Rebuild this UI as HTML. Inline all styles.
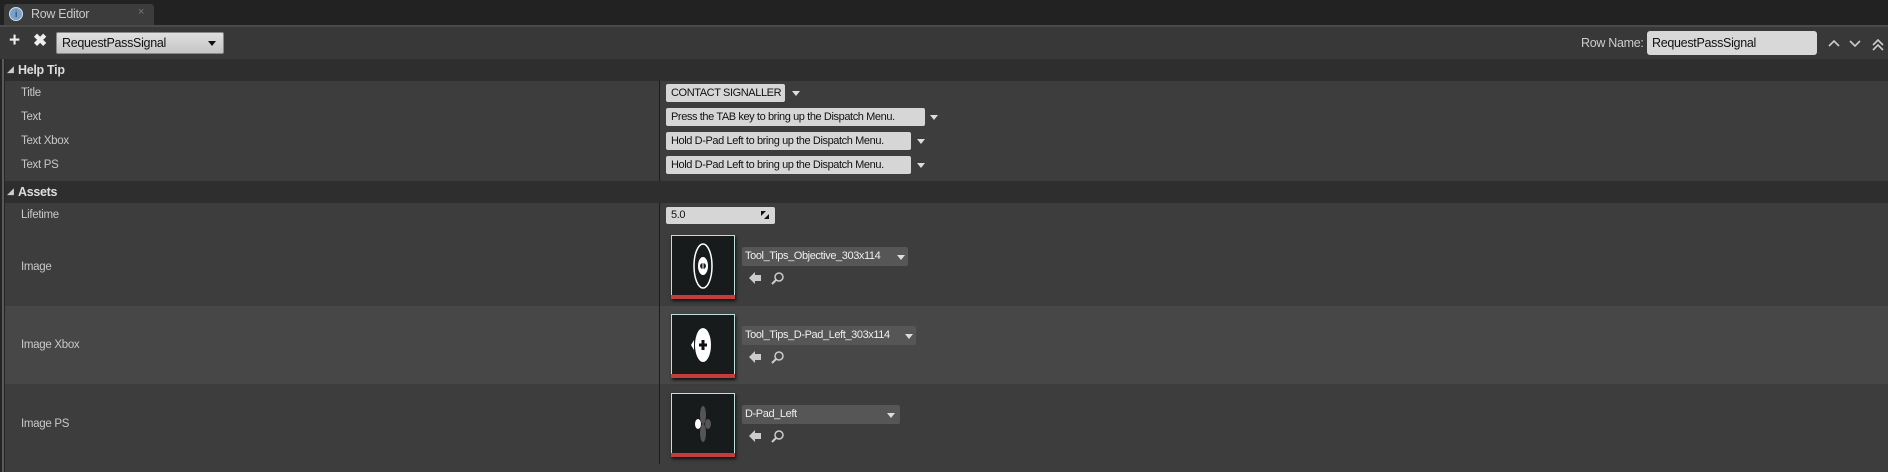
<!DOCTYPE html>
<html><head><meta charset="utf-8"><style>
*{margin:0;padding:0;box-sizing:border-box}
body{width:1888px;height:472px;background:#242424;position:relative;overflow:hidden;font-family:"Liberation Sans",sans-serif;font-size:12px;color:#d0d0d0;letter-spacing:-0.3px}
.a{position:absolute}
.lbl{position:absolute;left:21px;font-size:11.5px;color:#c8c8c8}
.box{position:absolute;background:#d6d6d6;color:#111;border-radius:2px;height:18px;line-height:18px;padding-left:5px;font-size:11px;white-space:nowrap;letter-spacing:-0.4px}
.tri{position:absolute;width:0;height:0;border-left:4px solid transparent;border-right:4px solid transparent;border-top:5px solid #ddd}
.cmb{position:absolute;background:#565656;border-radius:2px;height:19px;line-height:19px;padding-left:3px;color:#eee;font-size:11px;letter-spacing:-0.4px;white-space:nowrap}
.th{position:absolute;left:671px;width:64px;height:64px;background:#181b1b;border:1px solid #bfe0de;border-bottom:none;box-shadow:1px 2px 3px #111}
.th .r{position:absolute;left:-1px;right:-1px;bottom:0;height:4px;background:#c43c3c}
</style></head><body>
<div class="a" style="left:0;top:0;width:1888px;height:26px;background:#222"></div>
<div class="a" style="left:4px;top:4px;width:150px;height:22px;background:#3c3c3c;border-radius:3px 3px 0 0"></div>
<div class="a" style="left:9px;top:7px;width:14px;height:14px;border-radius:50%;background:#7aa1c9;border:1px solid #cfe0f0;color:#123;font-size:9px;text-align:center;line-height:12px">i</div>
<div class="a" style="left:31px;top:7px;font-size:12.5px;color:#c8c8c8">Row Editor</div>
<div class="a" style="left:138px;top:6px;font-size:11px;color:#777">×</div>
<div class="a" style="left:0;top:25px;width:1888px;height:2px;background:#4a4a4a"></div>
<div class="a" style="left:0;top:27px;width:1888px;height:32px;background:#383838"></div>
<div class="a" style="left:9px;top:30px;font-size:19px;font-weight:bold;color:#eee">+</div>
<div class="a" style="left:33px;top:31px;font-size:17px;font-weight:bold;color:#eee">✖</div>
<div class="a" style="left:56px;top:32px;width:168px;height:22px;background:linear-gradient(#e0e0e0,#c4c4c4);border-radius:2px;border:1px solid #888;color:#111;font-size:12.5px;line-height:20px;padding-left:5px">RequestPassSignal</div>
<div class="tri" style="left:208px;top:41px;border-top-color:#111"></div>
<div class="a" style="left:1581px;top:36px;font-size:12.5px;color:#ccc;white-space:nowrap">Row Name:</div>
<div class="a" style="left:1647px;top:31px;width:170px;height:24px;background:#d8d8d8;border-radius:3px;color:#111;font-size:12.5px;line-height:24px;padding-left:5px">RequestPassSignal</div>
<svg class="a" style="left:1822px;top:34px" width="66" height="20" fill="none" stroke="#ccc" stroke-width="1.6"><path d="M7 12l5-5 5 5M28 7l5 5 5-5M51 11l5-5 5 5M51 16l5-5 5 5"/></svg>
<div class="a" style="left:2px;top:59px;width:2px;height:413px;background:#5a5a5a"></div>
<div class="a" style="left:5px;top:59px;width:1883px;height:22px;background:#2e2e2e"></div>
<div class="a" style="left:7px;top:64px;font-size:9px;color:#ccc">◢</div>
<div class="a" style="left:18px;top:63px;font-size:12.5px;font-weight:bold;color:#ddd">Help Tip</div>
<div class="a" style="left:5px;top:81px;width:1883px;height:100px;background:#3d3d3d"></div>
<div class="a" style="left:659px;top:81px;width:1px;height:100px;background:#1c1c1c"></div>
<div class="lbl" style="top:87px">Title</div>
<div class="lbl" style="top:111px">Text</div>
<div class="lbl" style="top:135px">Text Xbox</div>
<div class="lbl" style="top:159px">Text PS</div>
<div class="box" style="left:666px;top:84px;width:119px">CONTACT SIGNALLER</div><div class="tri" style="left:792px;top:91px"></div>
<div class="box" style="left:666px;top:108px;width:259px">Press the TAB key to bring up the Dispatch Menu.</div><div class="tri" style="left:930px;top:115px"></div>
<div class="box" style="left:666px;top:132px;width:245px">Hold D-Pad Left to bring up the Dispatch Menu.</div><div class="tri" style="left:917px;top:139px"></div>
<div class="box" style="left:666px;top:156px;width:245px">Hold D-Pad Left to bring up the Dispatch Menu.</div><div class="tri" style="left:917px;top:163px"></div>
<div class="a" style="left:5px;top:181px;width:1883px;height:22px;background:#2e2e2e"></div>
<div class="a" style="left:7px;top:186px;font-size:9px;color:#ccc">◢</div>
<div class="a" style="left:18px;top:185px;font-size:12.5px;font-weight:bold;color:#ddd">Assets</div>
<div class="a" style="left:5px;top:203px;width:1883px;height:269px;background:#3d3d3d"></div>
<div class="a" style="left:5px;top:306px;width:1883px;height:78px;background:#474747"></div>
<div class="a" style="left:659px;top:203px;width:1px;height:261px;background:#1c1c1c"></div>
<div class="lbl" style="top:209px">Lifetime</div>
<div class="lbl" style="top:261px">Image</div>
<div class="lbl" style="top:339px">Image Xbox</div>
<div class="lbl" style="top:418px">Image PS</div>
<div class="box" style="left:666px;top:207px;width:109px;height:17px;line-height:17px">5.0</div>
<svg class="a" style="left:760px;top:210px" width="10" height="10"><path d="M1 1h5L1 6zM9 9H4l5-5z" fill="#111"/></svg>
<div class="th" style="top:235px"><svg width="62" height="60"><ellipse cx="31" cy="30" rx="9" ry="22" fill="none" stroke="#fff" stroke-width="1.5"/><ellipse cx="31" cy="30" rx="5" ry="9" fill="#fff"/><circle cx="31" cy="30" r="3" fill="#222"/><path d="M31 26v8" stroke="#fff"/></svg><div class="r"></div></div>
<div class="th" style="top:314px"><svg width="62" height="60"><ellipse cx="31" cy="30" rx="8" ry="17" fill="#fff"/><path d="M22 25l-3 5 3 5z" fill="#fff"/><path d="M27 30h8M31 25v10" stroke="#111" stroke-width="3"/></svg><div class="r"></div></div>
<div class="th" style="top:393px"><svg width="62" height="60"><ellipse cx="31" cy="21" rx="3" ry="9" fill="#555"/><ellipse cx="31" cy="39" rx="3" ry="9" fill="#555"/><ellipse cx="36" cy="30" rx="3" ry="5" fill="#555"/><ellipse cx="26" cy="30" rx="3" ry="5" fill="#fff"/></svg><div class="r"></div></div>
<div class="cmb" style="left:742px;top:247px;width:166px">Tool_Tips_Objective_303x114</div><div class="tri" style="left:897px;top:255px"></div>
<div class="cmb" style="left:742px;top:326px;width:174px">Tool_Tips_D-Pad_Left_303x114</div><div class="tri" style="left:905px;top:334px"></div>
<div class="cmb" style="left:742px;top:405px;width:158px">D-Pad_Left</div><div class="tri" style="left:887px;top:413px"></div>
<svg class="a" style="left:747px;top:271px" width="50" height="14"><path d="M2 7l6-6v3h6v6H8v3z" fill="#ccc"/><circle cx="32" cy="6" r="4" fill="none" stroke="#ccc" stroke-width="1.5"/><path d="M29 9l-4 4" stroke="#ccc" stroke-width="2"/></svg>
<svg class="a" style="left:747px;top:350px" width="50" height="14"><path d="M2 7l6-6v3h6v6H8v3z" fill="#ccc"/><circle cx="32" cy="6" r="4" fill="none" stroke="#ccc" stroke-width="1.5"/><path d="M29 9l-4 4" stroke="#ccc" stroke-width="2"/></svg>
<svg class="a" style="left:747px;top:429px" width="50" height="14"><path d="M2 7l6-6v3h6v6H8v3z" fill="#ccc"/><circle cx="32" cy="6" r="4" fill="none" stroke="#ccc" stroke-width="1.5"/><path d="M29 9l-4 4" stroke="#ccc" stroke-width="2"/></svg>
</body></html>
